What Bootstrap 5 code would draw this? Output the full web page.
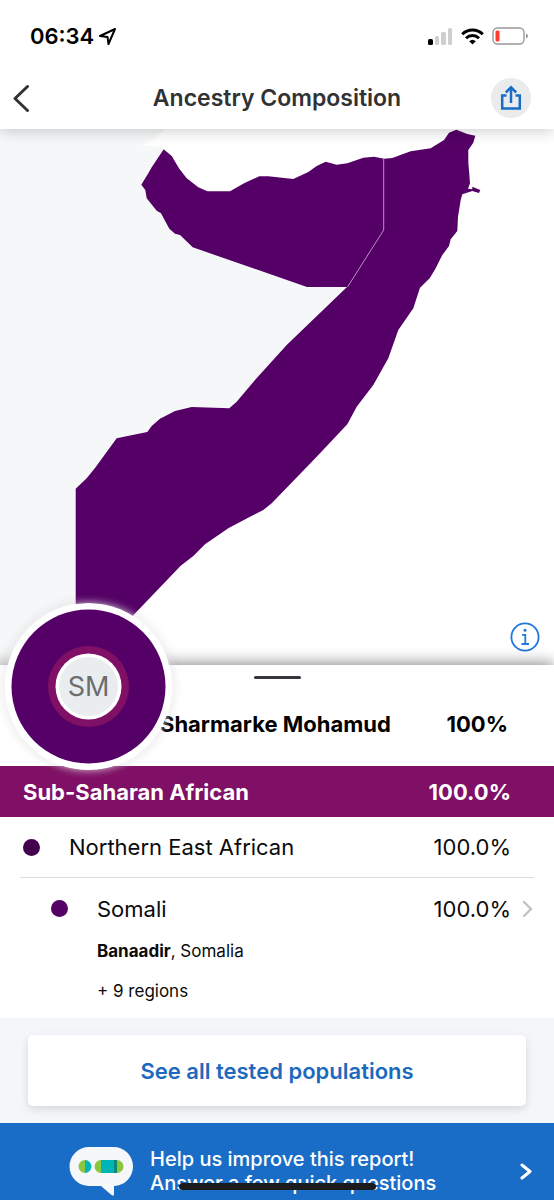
<!DOCTYPE html>
<html lang="en">
<head>
<meta charset="utf-8">
<meta name="viewport" content="width=device-width, initial-scale=1">
<title>Ancestry Composition</title>
<link href="https://cdn.jsdelivr.net/npm/bootstrap@5.3.0/dist/css/bootstrap.min.css" rel="stylesheet">
<style>
  body { font-family: Inter, "Liberation Sans", sans-serif; font-size: 22px; line-height: 32px; color: #0b0b0c; background: #fff; }
  svg { display: block; flex: none; }
  .status-bar { height: 72px; padding: 0 26px 0 30px; font-weight: 600; color: #000; }
  .app-header { position: relative; z-index: 2; background: #fff; box-shadow: 0 2px 14px rgba(0,0,0,.2); }
  .title-bar { height: 57px; padding: 0 23px 6px 12px; }
  .title-bar h1 { font-size: 23px; line-height: 32px; font-weight: 600; color: #303234; }
  .icon-button { border: 0; padding: 0; background: none; }
  .share-button { width: 40px; height: 40px; border-radius: 50%; background: #e9ebec; }
  .title-side { width: 51px; }
  .map-area { position: relative; }
  .map-area > svg { width: 100%; height: auto; }
  .info-button { position: absolute; right: 14px; bottom: 13px; }
  .sheet { position: relative; background: #fff; box-shadow: 0 -2px 14px rgba(0,0,0,.45); }
  .donut { position: absolute; left: 5px; top: -62px; width: 167px; height: 167px; border-radius: 50%; box-shadow: 0 0 9px rgba(255,255,255,.8), 0 0 12px rgba(0,0,0,.15); }
  .donut svg text { font-size: 27px; fill: #6b6d6f; }
  .handle { width: 47px; height: 3px; margin-top: 11px; border-radius: 2px; background: #34363b; }
  .person-row { height: 87px; padding: 3px 46px 0 160px; font-weight: 700; color: #000; }
  .continent-row { height: 51px; padding: 0 43px 0 23px; background: #800f66; color: #fff; font-weight: 700; }
  .group-row { height: 61px; margin: 0 20px; padding: 0 23px 0 3px; border-bottom: 1px solid #dcdcdc; }
  .population-row { height: 53px; padding: 8px 21px 0 51px; color: inherit; text-decoration: none; }
  .dot { width: 17px; height: 17px; margin-right: 29px; border-radius: 50%; background: #550066; }
  .dot-dark { background: #43004f; }
  .region-list { padding: 0 0 7px 97px; font-size: 17px; line-height: 40px; }
  .more-panel { position: relative; padding: 17px 28px; background: #f5f6f9; }
  .populations-button { height: 71px; border: 0; border-radius: 5px; background: #fff; color: #1d69bd; font-weight: 600; box-shadow: 0 3px 8px rgba(0,0,0,.13); }
  .feedback { position: relative; min-height: 77px; padding: 24px 22px 5px 69px; background: #1a6dc7; color: #fff; font-size: 20px; line-height: 24px; font-weight: 500; text-decoration: none; }
  .feedback-text { margin-left: 17px; }
  .home-indicator { position: absolute; left: 50%; bottom: 11px; width: 197px; height: 7px; margin-left: -98px; border-radius: 4px; background: #1b1b1d; }
</style>
</head>
<body>
<div class="d-flex flex-column min-vh-100">
  <header class="app-header">
    <div class="status-bar d-flex align-items-center justify-content-between">
      <div class="d-flex align-items-center gap-1">
        <span>06:34</span>
        <svg width="19" height="19" viewBox="0 0 19 19" fill="none" stroke="#000" stroke-width="2" stroke-linejoin="round"><path d="M17 2 2 9l7.500.9L10.500 17Z"/></svg>
      </div>
      <div class="d-flex align-items-center gap-2">
        <svg width="25" height="17" viewBox="0 0 25 17" fill="#cfcfcf"><rect y="11" width="5" height="6" rx="1.500" fill="#000"/><rect x="7" y="8" width="4" height="9" rx="1.500"/><rect x="13" y="4" width="5" height="13" rx="1.500"/><rect x="20" width="4" height="17" rx="1.500"/></svg>
        <svg width="23" height="17" viewBox="0 0 23 17" fill="none" stroke="#000" stroke-width="3"><path d="M1.200 6.300a14.700 14.700 0 0 1 20.600 0M5 10.200a9.300 9.300 0 0 1 13 0"/><path d="m8.200 13.200a4.800 4.800 0 0 1 6.600 0L11.500 16.600Z" fill="#000" stroke="none"/></svg>
        <svg width="36" height="18" viewBox="0 0 36 18"><rect x="1" y="1" width="31" height="16" rx="4.500" fill="none" stroke="#999" stroke-width="1.400"/><rect x="3.500" y="3.500" width="4" height="11" rx="1.500" fill="#ff3b30"/><path d="M34 6.500q2 .7 2 2.500t-2 2.500Z" fill="#999"/></svg>
      </div>
    </div>
    <div class="title-bar d-flex align-items-center justify-content-between">
      <div class="title-side d-flex"><button type="button" class="icon-button" aria-label="Back"><svg width="18" height="28" viewBox="0 0 18 28" fill="none" stroke="#303234" stroke-width="3" stroke-linecap="round" stroke-linejoin="round"><path d="M15.500 2.500 3 14.500l12.500 12"/></svg></button></div>
      <h1 class="m-0">Ancestry Composition</h1>
      <button type="button" class="icon-button share-button d-flex align-items-center justify-content-center" aria-label="Share"><svg width="22" height="26" viewBox="0 0 22 26" fill="none" stroke="#1a6dc7" stroke-width="2.500"><path d="M6.500 10.500H2.200V23.500h17.600V10.500H15.500M11 18V2.500M5.800 7.500 11 2.300l5.200 5.200"/></svg></button>
    </div>
  </header>

  <main class="flex-grow-1 d-flex flex-column">
    <section class="map-area">
      <svg viewBox="0 129 554 536" role="img" aria-label="Map of Somalia">
        <path fill="#f5f7f8" d="M0 129H165L155 138Q150 143 137 147 150 144 163 148L180 200 384 230 300 400 76 620V665H0Z"/>
        <path fill="#550066" d="M163.700 149.300 171.700 156 179.300 168.700 186.700 178.300 198.300 187.300 207.300 191.300H230L245 182.700 259.300 176.300H268.300L293.300 179 308.300 172 316.700 166 325.700 161.700 336.700 164.700 347.300 163.300 363.300 157.700 374 156.700 384 158.700 392.300 158 410.700 151.300 430.700 148.300 444 140 449 132.700 456.300 129.700 467.300 134 475.300 135.700 473.300 142.700 468.300 150V162L470 183.300 468 188.700 472.300 189.300V186.700L480.300 190 479 193 472.300 191 462.300 194.300 460.700 200 458 216.700 457.300 231 450.700 239.300 449 246 442.300 255 435.700 268.300 429.700 278.300 420 287.700 413.300 308.300 398.300 330 388.300 358.300 373.300 385 356.700 406.700 347.300 424.300 316.700 456.700 271.700 503.300 263.300 510 250 516.700 228.300 528.300 205 544.300 193.300 556 180.700 565.700 133.300 615.300 110 640H75.700V488.700L86.700 478.300 95 468 116.700 438.300 147.300 432 151.700 426 160 418.700 175 411 191.700 407 229.300 408.300 236.700 401.700 255 380 286.700 345 347 287H307L192.700 247.300 180 235 175 233.700 169.300 228.700 161 213.300 156.700 210.700 146.700 198.300 145.300 190 141.300 184.700 148.300 173.300 151.700 167.300Z"/>
        <path fill="none" stroke="#b890c0" d="M383.700 158.500V230L347.500 287"/>
      </svg>
      <button type="button" class="icon-button info-button" aria-label="Information"><svg width="30" height="30" viewBox="0 0 30 30" fill="none" stroke="#1f78e0" stroke-width="1.800"><circle cx="15" cy="15" r="13.600"/><path d="M12 12.800h3.300V22M11.500 22h7.500"/><circle cx="15" cy="8.300" r="1.500" fill="#1f78e0" stroke="none"/></svg></button>
    </section>

    <section class="sheet">
      <div class="d-flex justify-content-center"><div class="handle"></div></div>
      <div class="person-row d-flex align-items-center justify-content-between"><span>Sharmarke Mohamud</span><span>100%</span></div>
      <div class="continent-row d-flex align-items-center justify-content-between"><span>Sub-Saharan African</span><span>100.0%</span></div>
      <div class="group-row d-flex align-items-center"><span class="dot dot-dark"></span><span>Northern East African</span><span class="ms-auto">100.0%</span></div>
      <a href="#somali" class="population-row d-flex align-items-center"><span class="dot"></span><span>Somali</span><span class="ms-auto">100.0%</span><svg class="ms-2" width="14" height="18" viewBox="0 0 14 18" fill="none" stroke="#c2c2c4" stroke-width="2.400" stroke-linecap="round"><path d="m5 2 7 7-7 7"/></svg></a>
      <div class="region-list" id="somali"><div><b>Banaadir</b>, Somalia</div><div>+ 9 regions</div></div>
      <div class="donut">
        <svg width="167" height="167" viewBox="0 0 167 167"><circle cx="83.500" cy="83.500" r="83.500" fill="#fff"/><circle cx="83.500" cy="83.500" r="77" fill="#550066"/><circle cx="83.500" cy="83.500" r="40.500" fill="#800f66"/><circle cx="83.500" cy="83.500" r="33" fill="#fff"/><circle cx="83.500" cy="83.500" r="29.500" fill="#e9edef"/><text x="83.500" y="93" text-anchor="middle">SM</text></svg>
      </div>
    </section>

    <section class="more-panel"><button type="button" class="populations-button w-100">See all tested populations</button></section>

    <a href="#feedback" class="feedback flex-grow-1 d-flex align-items-start">
      <svg width="64" height="49" viewBox="0 0 64 49"><path d="M20 0H44A19.500 19.500 0 0 1 45 39V47q0 3-2.500 1L32 39H20A19.500 19.500 0 0 1 20 0Z" fill="#f5f7fa"/><path d="M16 13a6.500 6.500 0 0 0 0 13Z" fill="#8cc63e"/><path d="M16 13a6.500 6.500 0 0 1 0 13Z" fill="#00b5b8"/><path d="M32 13a6.500 6.500 0 0 0 0 13ZM48 13a6.500 6.500 0 0 1 0 13Z" fill="#8cc63e"/><path d="M32 13H46V26H32Z" fill="#00b5b8"/><path d="M45 13h3v13h-3Z" fill="#138575"/></svg>
      <span class="feedback-text">Help us improve this report!<br>Answer a few quick questions</span>
      <svg class="ms-auto mt-3" width="12" height="17" viewBox="0 0 12 17" fill="none" stroke="#fff" stroke-width="3" stroke-linecap="round" stroke-linejoin="round"><path d="m2 2 8 6.500L2 15"/></svg>
      <span class="home-indicator"></span>
    </a>
  </main>
</div>
<script src="https://cdn.jsdelivr.net/npm/bootstrap@5.3.0/dist/js/bootstrap.bundle.min.js"></script>
</body>
</html>
